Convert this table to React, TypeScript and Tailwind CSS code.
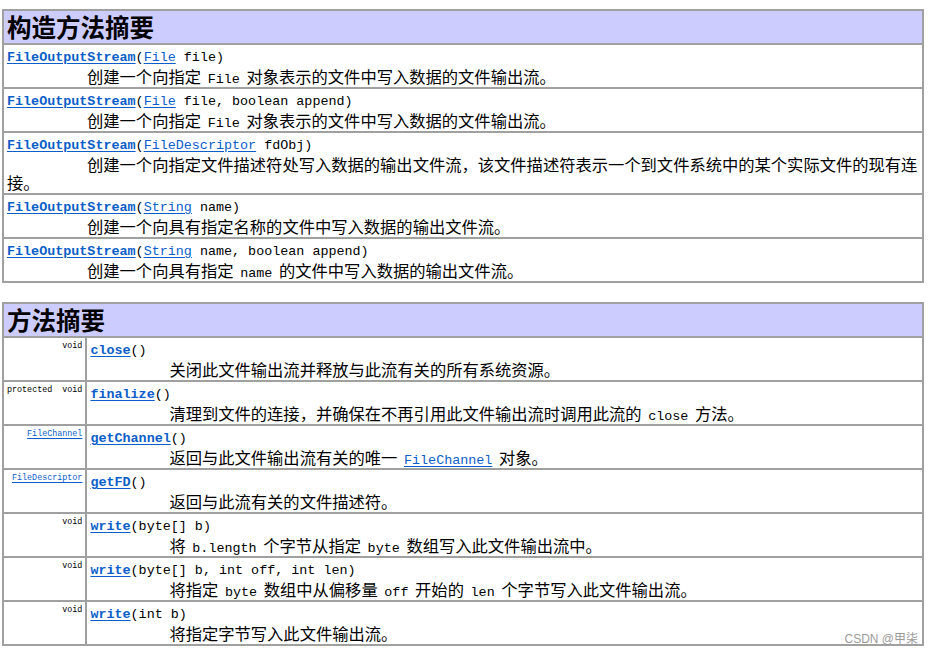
import React from "react";

interface ICtorRow {
    params: React.ReactNode;
    desc: React.ReactNode;
    extra?: string;
}

interface IMethodRow {
    type: React.ReactNode;
    name: string;
    params: React.ReactNode;
    desc: React.ReactNode;
}

const cjk = "font-['Noto_Sans_CJK_SC',sans-serif]";
const mono = "font-['Liberation_Mono','Noto_Sans_CJK_SC',monospace]";

const Code = ({ children }: { children: React.ReactNode }) => (
    <span className={`${mono} mx-[3px] text-[13.4px] leading-none`}>{children}</span>
);

const Link = ({ children, bold }: { children: React.ReactNode; bold?: boolean }) => (
    <a className={`text-[#0b5ec9] underline underline-offset-2 ${bold ? "font-bold" : ""}`}>{children}</a>
);

const ctorRows: ICtorRow[] = [
    {
        params: <>(<Link>File</Link> file)</>,
        desc: <>创建一个向指定 <Code>File</Code> 对象表示的文件中写入数据的文件输出流。</>,
    },
    {
        params: <>(<Link>File</Link> file, boolean append)</>,
        desc: <>创建一个向指定 <Code>File</Code> 对象表示的文件中写入数据的文件输出流。</>,
    },
    {
        params: <>(<Link>FileDescriptor</Link> fdObj)</>,
        desc: <>创建一个向指定文件描述符处写入数据的输出文件流，该文件描述符表示一个到文件系统中的某个实际文件的现有连</>,
        extra: "接。",
    },
    {
        params: <>(<Link>String</Link> name)</>,
        desc: <>创建一个向具有指定名称的文件中写入数据的输出文件流。</>,
    },
    {
        params: <>(<Link>String</Link> name, boolean append)</>,
        desc: <>创建一个向具有指定 <Code>name</Code> 的文件中写入数据的输出文件流。</>,
    },
];

const methodRows: IMethodRow[] = [
    { type: "void", name: "close", params: "()", desc: "关闭此文件输出流并释放与此流有关的所有系统资源。" },
    {
        type: "protected  void",
        name: "finalize",
        params: "()",
        desc: <>清理到文件的连接，并确保在不再引用此文件输出流时调用此流的 <Code>close</Code> 方法。</>,
    },
    {
        type: <Link>FileChannel</Link>,
        name: "getChannel",
        params: "()",
        desc: <>返回与此文件输出流有关的唯一 <Code><Link>FileChannel</Link></Code> 对象。</>,
    },
    { type: <Link>FileDescriptor</Link>, name: "getFD", params: "()", desc: "返回与此流有关的文件描述符。" },
    {
        type: "void",
        name: "write",
        params: "(byte[] b)",
        desc: <>将 <Code>b.length</Code> 个字节从指定 <Code>byte</Code> 数组写入此文件输出流中。</>,
    },
    {
        type: "void",
        name: "write",
        params: "(byte[] b, int off, int len)",
        desc: <>将指定 <Code>byte</Code> 数组中从偏移量 <Code>off</Code> 开始的 <Code>len</Code> 个字节写入此文件输出流。</>,
    },
    { type: "void", name: "write", params: "(int b)", desc: "将指定字节写入此文件输出流。" },
];

const Header = ({ title, span }: { title: string; span: number }) => (
    <tr>
        <th
            colSpan={span}
            className={`${cjk} h-[34px] border border-[#a0a0a0] bg-[#ccccff] px-[3px] py-0 text-left text-[24.5px] leading-[30px] font-bold text-black`}
        >
            {title}
        </th>
    </tr>
);

const App = () => {
    return (
        <div className={`${cjk} relative min-h-[654px] w-[934px] bg-white pt-[9px] text-black`}>
            <table className="ml-[2px] w-[922px] border-separate border-spacing-0 border border-[#a0a0a0]">
                <tbody>
                    <Header title="构造方法摘要" span={1} />
                    {ctorRows.map((row, index) => (
                        <tr key={index}>
                            <td className="border border-[#a0a0a0] px-[3px] pt-[4px] pb-[2px] align-top">
                                <div className={`${mono} h-[18px] text-[13.4px] leading-[18px] whitespace-nowrap`}>
                                    <Link bold>FileOutputStream</Link>
                                    {row.params}
                                </div>
                                <div className="h-[18px] text-[16.3px] leading-[18px] whitespace-nowrap">
                                    <span className="inline-block w-[80px]" />
                                    {row.desc}
                                </div>
                                {row.extra && (
                                    <div className="h-[18px] text-[16.3px] leading-[18px]">{row.extra}</div>
                                )}
                            </td>
                        </tr>
                    ))}
                </tbody>
            </table>

            <table className="mt-[19px] ml-[2px] w-[922px] border-separate border-spacing-0 border border-[#a0a0a0]">
                <tbody>
                    <Header title="方法摘要" span={2} />
                    {methodRows.map((row, index) => (
                        <tr key={index}>
                            <td
                                className={`${mono} w-[83px] border border-[#a0a0a0] px-[3px] py-[3px] text-right align-top text-[8.4px] leading-[11px] whitespace-pre`}
                            >
                                {row.type}
                            </td>
                            <td className="border border-[#a0a0a0] px-[3px] pt-[4px] pb-[2px] align-top">
                                <div className={`${mono} h-[18px] text-[13.4px] leading-[18px] whitespace-nowrap`}>
                                    <Link bold>{row.name}</Link>
                                    {row.params}
                                </div>
                                <div className="h-[18px] text-[16.3px] leading-[18px] whitespace-nowrap">
                                    <span className="inline-block w-[79px]" />
                                    {row.desc}
                                </div>
                            </td>
                        </tr>
                    ))}
                </tbody>
            </table>

            <div className="absolute right-[16px] bottom-[6px] font-['Liberation_Sans','Noto_Sans_CJK_SC',sans-serif] text-[12px] text-[#9a9a9a]">
                CSDN @甲柒
            </div>
        </div>
    );
};

export default App;
